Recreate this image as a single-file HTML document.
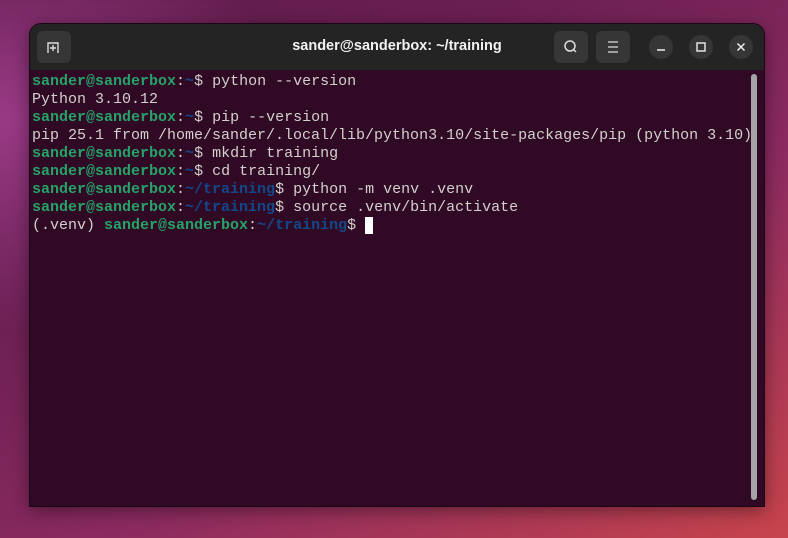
<!DOCTYPE html>
<html><head><style>
html,body{margin:0;padding:0;width:788px;height:538px;overflow:hidden;}
body{background:
 radial-gradient(ellipse 420px 300px at 0px 120px,#9a3a86 0%,rgba(154,58,134,0) 70%),
 linear-gradient(150deg,#5e1c4a 0%,#6a1f52 30%,#8a2a60 60%,#c7444c 100%);
 position:relative;font-family:"Liberation Sans",sans-serif;}
.win{position:absolute;left:30px;top:24px;width:734px;height:482px;background:#300a24;border-radius:11px 11px 0 0;overflow:hidden;box-shadow:0 4px 18px rgba(0,0,0,.45);outline:1px solid #1a0614;}
.tb{position:absolute;left:0;top:0;width:734px;height:46px;background:#242424;}
.btn{position:absolute;top:7px;width:34px;height:32px;background:#363636;border-radius:6px;}
.cir{position:absolute;top:11px;width:24px;height:24px;background:#363636;border-radius:50%;}
.title{position:absolute;left:0;width:734px;top:14px;text-align:center;color:#f2f2f2;font-weight:bold;font-size:14.5px;}
.term{position:absolute;left:2px;top:49px;font-family:"Liberation Mono",monospace;font-size:15px;line-height:18px;color:#d3d0cd;white-space:pre;}
.g{color:#26a269;font-weight:bold;}
.b{color:#12488b;font-weight:bold;}
.cur{display:inline-block;width:8px;height:17px;background:#fff;vertical-align:top;margin-top:0px;}
.sb{position:absolute;left:721px;top:50px;width:6px;height:426px;background:#a6a3a6;border-radius:3px;}
</style></head><body>
<div class="win">
 <div class="tb">
  <div class="btn" style="left:7px"><svg width="34" height="32"><path d="M11 22V12h10v10M16 14v6M13 17h6" stroke="#ddd" stroke-width="1.4" fill="none"/></svg></div>
  <div class="title">sander@sanderbox: ~/training</div>
  <div class="btn" style="left:524px"><svg width="34" height="32"><circle cx="16" cy="15" r="5" stroke="#ddd" stroke-width="1.5" fill="none"/><path d="M19.5 18.5L22 21" stroke="#ddd" stroke-width="1.5"/></svg></div>
  <div class="btn" style="left:566px"><svg width="34" height="32"><path d="M12 11h10M12 16h10M12 21h10" stroke="#ddd" stroke-width="1.3"/></svg></div>
  <div class="cir" style="left:619px"><svg width="24" height="24"><path d="M8 15h8" stroke="#eee" stroke-width="1.5"/></svg></div>
  <div class="cir" style="left:659px"><svg width="24" height="24"><rect x="8" y="8" width="8" height="8" stroke="#eee" stroke-width="1.4" fill="none"/></svg></div>
  <div class="cir" style="left:699px"><svg width="24" height="24"><path d="M8.5 8.5l7 7M15.5 8.5l-7 7" stroke="#eee" stroke-width="1.5"/></svg></div>
 </div>
 <div class="term"><span class="g">sander@sanderbox</span>:<span class="b">~</span>$ python --version
Python 3.10.12
<span class="g">sander@sanderbox</span>:<span class="b">~</span>$ pip --version
pip 25.1 from /home/sander/.local/lib/python3.10/site-packages/pip (python 3.10)
<span class="g">sander@sanderbox</span>:<span class="b">~</span>$ mkdir training
<span class="g">sander@sanderbox</span>:<span class="b">~</span>$ cd training/
<span class="g">sander@sanderbox</span>:<span class="b">~/training</span>$ python -m venv .venv
<span class="g">sander@sanderbox</span>:<span class="b">~/training</span>$ source .venv/bin/activate
(.venv) <span class="g">sander@sanderbox</span>:<span class="b">~/training</span>$ <span class="cur"></span></div>
 <div class="sb"></div>
</div>
</body></html>
